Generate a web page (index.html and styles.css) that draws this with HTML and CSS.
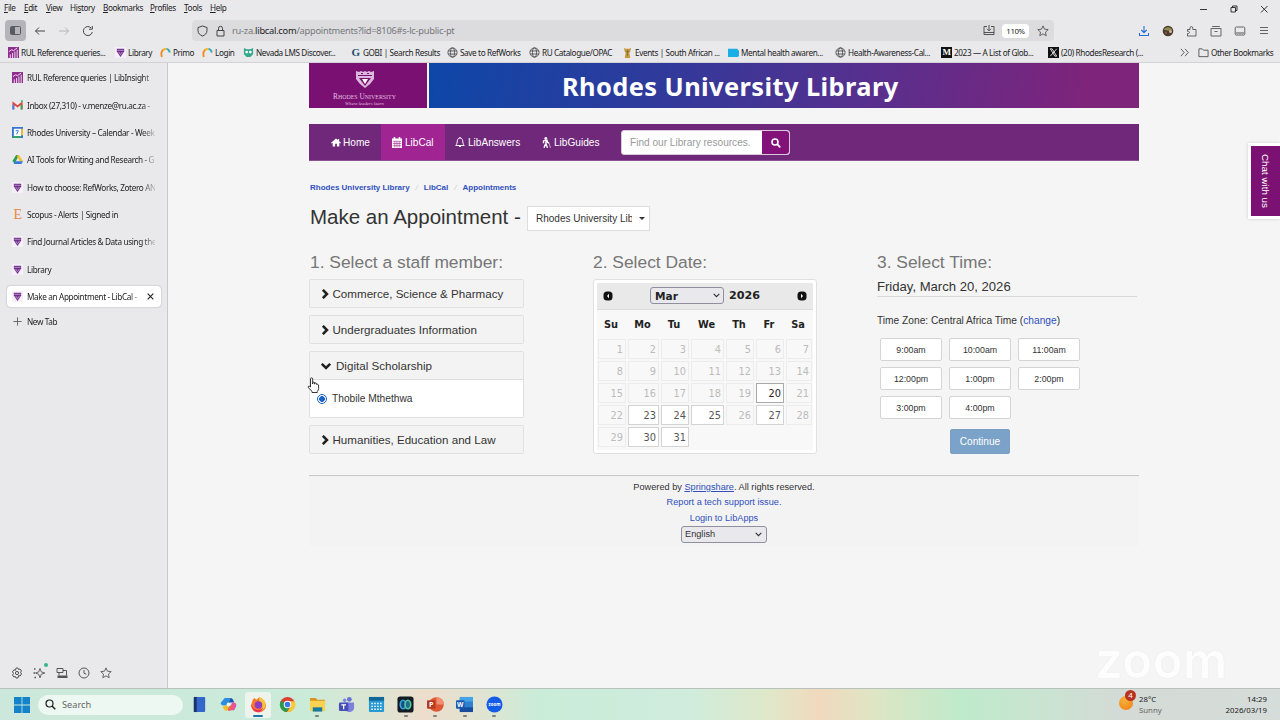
FILE: index.html
```html
<!DOCTYPE html>
<html lang="en">
<head>
  <meta charset="UTF-8" />
  <meta name="viewport" content="width=device-width, initial-scale=1.0"/>
  <title>Make an Appointment - LibCal</title>
  <link rel="stylesheet" href="styles.css">
</head>
<body>

  <!-- shared icons -->
  <svg class="defs" width="0" height="0">
    <symbol id="crest" viewBox="0 0 12 12">
      <rect width="12" height="12" fill="#f6effa"/>
      <path d="M2 2h8v3L6 11 2 5z" fill="#70308a"/>
      <path d="M2.5 3.6h7M4 5.4l2 3 2-3" stroke="#d9bde6" stroke-width=".7" fill="none"/>
    </symbol>
    <symbol id="insight" viewBox="0 0 12 12">
      <rect width="12" height="12" fill="#8f2d8f"/>
      <path d="M2.5 12V8M5 12V6.500M7.500 12V5M10 12V3M1 5l3-2 2 1 4-3" stroke="#fff" stroke-width=".9" fill="none"/>
    </symbol>
    <symbol id="globe" viewBox="0 0 12 12">
      <g fill="none" stroke="#444" stroke-width=".9"><circle cx="6" cy="6" r="5"/><ellipse cx="6" cy="6" rx="2.2" ry="5"/><path d="M1.4 4.3h9.2M1.4 7.7h9.2"/></g>
    </symbol>
    <symbol id="primo" viewBox="0 0 12 12">
      <g fill="none" stroke-width="2"><path d="M2 11Q0 3 6 2" stroke="#f08a1d"/><path d="M3.5 3.5Q5 1.8 7 2" stroke="#f4c21f"/><path d="M7 2q3 .3 3.6 4" stroke="#35a9b5"/></g>
    </symbol>
    <symbol id="chev" viewBox="0 0 8 8"><path d="M1.5 2.5L4 5l2.5-2.5" fill="none" stroke="#333" stroke-width="1"/></symbol>
    <symbol id="right" viewBox="0 0 10 10"><path d="M2.8 .8L7 5 2.8 9.2" fill="none" stroke="#222" stroke-width="2.5"/></symbol>
    <symbol id="star" viewBox="0 0 12 12"><path d="M6 .9l1.5 3.3 3.7.4-2.7 2.5.7 3.6L6 8.9l-3.2 1.8.7-3.6L.8 4.6l3.7-.4z" fill="none" stroke="#555" stroke-width=".9" stroke-linejoin="round"/></symbol>
  </svg>

  <header class="browser">
    <div class="menubar">
      <span><u>F</u>ile</span><span><u>E</u>dit</span><span><u>V</u>iew</span><span>Hi<u>s</u>tory</span><span><u>B</u>ookmarks</span><span><u>P</u>rofiles</span><span><u>T</u>ools</span><span><u>H</u>elp</span>
      <svg class="win-buttons" width="70" height="12" viewBox="0 0 70 12" fill="none" stroke="#222" stroke-width=".9">
        <path d="M0 6.500h7M31 4.500h4.500V9H31zM32.500 4.500V3H37v4.500h-1.500M61 3l6.500 6.500M67.500 3L61 9.500"/>
      </svg>
    </div>

    <div class="toolbar">
      <span class="side-toggle"><svg width="11" height="9" viewBox="0 0 11 9"><rect x=".5" y=".5" width="10" height="8" rx="1" fill="none" stroke="#5a5a62"/><path d="M1 1h4v7H1z" fill="#5a5a62"/></svg></span>
      <svg class="nav-icons" width="64" height="14" viewBox="0 0 64 14" fill="none" stroke-width="1">
        <path d="M14 7H4.500M8 3.500L4.500 7 8 10.500" stroke="#444"/>
        <path d="M28 7h9.500M34 3.500L37.500 7 34 10.500" stroke="#b5b5b8"/>
        <path d="M60 3.800A4.500 4.500 0 1 0 61.300 8M61.300 2v3.200H58" stroke="#444"/>
      </svg>
      <div class="urlbar">
        <svg width="11" height="12" viewBox="0 0 11 12"><path d="M5.500 1l4.500 1.500v3c0 3-2 4.500-4.500 5.500C3 10 1 8.500 1 5.500v-3z" fill="none" stroke="#444" stroke-width="1"/></svg>
        <svg class="lock" width="9" height="12" viewBox="0 0 9 12"><path d="M1 5.500h7V11H1zM2.500 5.500V3.300a2 2 0 0 1 4 0v2.200" fill="none" stroke="#444" stroke-width="1"/></svg>
        <span class="url">ru-za.<b>libcal.com</b>/appointments?lid=8106#s-lc-public-pt</span>
        <svg class="save" width="12" height="11" viewBox="0 0 12 11"><path d="M4 1.500H1v8h10v-8H8M1 7.500h10M6 0v5.500M4 3.800l2 2 2-2" fill="none" stroke="#444" stroke-width=".9"/></svg>
        <span class="zoom-level">110%</span>
        <svg width="12" height="12"><use href="#star"/></svg>
      </div>
      <div class="tools">
        <svg width="12" height="12" viewBox="0 0 12 12"><path d="M6 1v6.500M3.300 5L6 7.700 8.700 5M1.500 8v2.500h9V8" fill="none" stroke="#2a6fd6" stroke-width="1.100"/></svg>
        <svg width="12" height="12" viewBox="0 0 12 12"><circle cx="6" cy="6" r="5.300" fill="#4e3b30"/><path d="M1.500 4.500Q6 0 10.500 4.500L8 6 3 5z" fill="#8a9150"/><circle cx="8.500" cy="6.500" r="1.500" fill="#d8b2a0"/><circle cx="4" cy="7.800" r="1.200" fill="#87514b"/></svg>
        <svg width="12" height="12" viewBox="0 0 12 12"><path d="M1.500 4.500H4V3a1.400 1.400 0 0 1 2.800 0v1.500H10v6.500H1.500V8.500h1.200a1.200 1.200 0 0 0 0-2.200H1.500z" fill="none" stroke="#555" stroke-width=".9"/></svg>
        <svg width="12" height="12" viewBox="0 0 12 12"><path d="M2.200 1.500h7.600M1 3.500h10v7.500H1zM4.500 6.500h3" fill="none" stroke="#555" stroke-width=".9"/></svg>
        <svg width="12" height="12" viewBox="0 0 12 12"><rect x="1.200" y="2" width="9.600" height="8" rx="1.200" fill="none" stroke="#555" stroke-width=".9"/><path d="M2 8h8" stroke="#555"/></svg>
        <svg width="12" height="12" viewBox="0 0 12 12"><path d="M2 2.500h8M2 5.500h8M2 8.500h8" stroke="#555" stroke-width=".9"/></svg>
      </div>
    </div>

    <nav class="bookmarks">
      <a><svg><use href="#insight"/></svg>RUL Reference queries...</a>
      <a><svg><use href="#crest"/></svg>Library</a>
      <a><svg><use href="#primo"/></svg>Primo</a>
      <a><svg><use href="#primo"/></svg>Login</a>
      <a><svg viewBox="0 0 12 12"><path d="M1 1l3 1.500h4L11 1v7l-3 3H4L1 8z" fill="#35a98c"/><circle cx="4" cy="5.500" r="1.500" fill="#fff"/><circle cx="8" cy="5.500" r="1.500" fill="#fff"/></svg>Nevada LMS Discover...</a>
      <a><span class="ico gobi">G</span>GOBI | Search Results</a>
      <a><svg><use href="#globe"/></svg>Save to RefWorks</a>
      <a><svg><use href="#globe"/></svg>RU Catalogue/OPAC</a>
      <a><svg viewBox="0 0 12 12"><path d="M2 1l2 1h4l2-1-1 4-1 1 1 6H3l1-6-1-1z" fill="#c49a3a"/><path d="M6 3v7M4 5h4" stroke="#8b6f3b"/></svg>Events | South African ...</a>
      <a><svg viewBox="0 0 12 12"><path d="M0 2h10l2 2v6l-2 1H0z" fill="#19aee5"/></svg>Mental health awaren...</a>
      <a><svg><use href="#globe"/></svg>Health-Awareness-Cal...</a>
      <a><span class="ico medium">M</span>2023 — A List of Glob...</a>
      <a><svg viewBox="0 0 12 12"><rect width="12" height="12" fill="#111"/><path d="M2.500 2h2l5 8h-2zM9.500 2l-7 8" stroke="#fff" stroke-width=".9" fill="none"/></svg>(20) RhodesResearch (...</a>
      <a><svg viewBox="0 0 12 12"><path d="M1 2l3.500 4L1 10M5.500 2L9 6l-3.500 4" fill="none" stroke="#444" stroke-width=".9"/></svg></a>
      <a><svg viewBox="0 0 12 12"><path d="M1 2h3.500L6 3.500h5v7H1z" fill="none" stroke="#444" stroke-width=".9"/></svg>Other Bookmarks</a>
    </nav>
  </header>

  <div class="content">
    <aside class="sidebar">
      <div class="tab"><svg><use href="#insight"/></svg><span>RUL Reference queries | LibInsight</span></div>
      <div class="tab"><svg viewBox="0 0 12 12"><path d="M1.500 10V3.500L6 7l4.500-3.500V10" fill="none" stroke="#e0453a" stroke-width="2"/><path d="M1.500 10.500V5" stroke="#3f83ee" stroke-width="2"/><path d="M10.500 10.500V5" stroke="#37a857" stroke-width="2"/><circle cx="10.800" cy="1.200" r="1.200" fill="#3dbb8b"/></svg><span>Inbox (27,310) - v.menze@ru.ac.za -</span></div>
      <div class="tab"><svg viewBox="0 0 12 12"><path d="M1 1h10v10H1z" fill="#fff" stroke="#2f76d8" stroke-width="2"/><path d="M11 2v7" stroke="#f6bd27" stroke-width="2"/><path d="M1 11h8" stroke="#35a356" stroke-width="2"/><path d="M4 4h3L5 8" stroke="#2f76d8" fill="none"/></svg><span>Rhodes University – Calendar - Week</span></div>
      <div class="tab"><svg viewBox="0 0 12 12"><path d="M4.500 1h3L3 10.500.5 7.500z" fill="#299b52"/><path d="M7.500 1L12 8H8.500L5 2z" fill="#f4bd25"/><path d="M3.500 8H12l-1.700 3H2z" fill="#3a78df"/></svg><span>AI Tools for Writing and Research - G</span></div>
      <div class="tab"><svg><use href="#crest"/></svg><span>How to choose: RefWorks, Zotero AN</span></div>
      <div class="tab"><span class="ico scopus">E</span><span>Scopus - Alerts | Signed in</span></div>
      <div class="tab"><svg><use href="#crest"/></svg><span>Find Journal Articles &amp; Data using the</span></div>
      <div class="tab"><svg><use href="#crest"/></svg><span>Library</span></div>
      <div class="tab active"><svg><use href="#crest"/></svg><span>Make an Appointment - LibCal -</span><svg class="close" viewBox="0 0 8 8"><path d="M1.500 1.500l5 5M6.500 1.500l-5 5" stroke="#222" stroke-width="1"/></svg></div>
      <div class="tab new"><svg viewBox="0 0 12 12"><path d="M6 1.500v9M1.500 6h9" stroke="#555" stroke-width=".9"/></svg><span>New Tab</span></div>
      <div class="side-tools">
        <svg viewBox="0 0 12 12" fill="none" stroke="#555"><path d="M5 1h2l.5 1.500 1.500-.5 1.500 2-1 1.200 1 1.800-1.300 2-1.700-.5L7 11H5l-.6-1.500-1.600.5-1.300-2 1-1.500-1-1.700 1.400-2 1.600.5z"/><circle cx="6" cy="6" r="1.600"/></svg>
        <svg viewBox="0 0 12 12"><path d="M7 1.500l1.300 3.400L11.800 6 8.300 7.200 7 10.800 5.700 7.200 2.500 6l3.200-1.100z" fill="none" stroke="#555" stroke-width=".9"/><path d="M1 2h1.500M.5 6H2M1.500 10.500H3" stroke="#555" stroke-width="1.300"/></svg>
        <svg viewBox="0 0 12 12"><path d="M1 1.500h6v4H1zM7 3.500h3.500v5M3 5.500v3" fill="none" stroke="#555"/><path d="M1.500 8.500h10V11h-10z" fill="#555"/></svg>
        <svg viewBox="0 0 12 12" fill="none" stroke="#555"><circle cx="6" cy="6" r="5"/><path d="M6 3v3.300l2.300.9"/></svg>
        <svg><use href="#star"/></svg>
        <i class="dot"></i>
      </div>
    </aside>

    <main class="page">
      <div class="banner">
        <div class="logo">
          <svg width="20" height="18" viewBox="0 0 20 18"><path d="M1 1l3 1 2-1 2 1 2-1 2 1 2-1 2 1 3-1v8l-4 5-5 4-5-4-4-5z" fill="#dcb8dc"/><path d="M3 5.500h14M6 3.500h2M12 3.500h2" stroke="#7a1072" stroke-width="1.200"/><path d="M4 8h12l-6 8z" fill="#7a1072"/><path d="M7 9h6l-3 5z" fill="#fff"/></svg>
          <div class="logo-name">R<small>HODES</small> U<small>NIVERSITY</small></div>
          <div class="logo-motto">Where leaders learn</div>
        </div>
        <div class="banner-title">Rhodes University Library</div>
      </div>

      <nav class="navbar">
        <a class="home"><svg width="10" height="9" viewBox="0 0 11 10"><path d="M5.500.5L0 5.300l.8.800 1-.8V9.500h2.700v-3h2v3h2.700V5.300l1 .8.800-.8L9 3.500V1H7.500v1.300z" fill="#fff"/></svg>Home</a>
        <a class="libcal"><svg width="10" height="11" viewBox="0 0 10 11"><path d="M0 1.500h10V11H0z" fill="#fff"/><path d="M2.500 0v3M7.500 0v3" stroke="#fff" stroke-width="1.600"/><path d="M.8 4.300h8.400M.8 6.500h8.400M.8 8.700h8.400M2.800 4.300V10.500M5 4.300v6.200M7.200 4.300v6.200" stroke="#a02492" stroke-width=".6"/></svg>LibCal</a>
        <a class="answers"><svg width="10" height="11" viewBox="0 0 10 11"><path d="M5 1C2.800 1 2.300 3 2.200 5 2 7 1.200 7.700.8 8.500h8.400C8.800 7.700 8 7 7.800 5 7.700 3 7.200 1 5 1zM4 9.500h2M5 0v1" fill="none" stroke="#fff"/></svg>LibAnswers</a>
        <a class="guides"><svg width="9" height="11" viewBox="0 0 9 11"><circle cx="3.800" cy="1.300" r="1.300" fill="#fff"/><path d="M3 3l2 .2.500 2 1.500 1M3 3L1.500 4.200v2M4 4v3l1.500 3.800M3.500 7l-1.500 3.800" fill="none" stroke="#fff" stroke-width="1.400"/><path d="M7 6l1.500 5" stroke="#fff" stroke-width=".6"/></svg>LibGuides</a>
        <div class="search">
          <span>Find our Library resources.</span>
          <button><svg width="10" height="10" viewBox="0 0 10 10"><circle cx="4" cy="4" r="3" fill="none" stroke="#fff" stroke-width="1.600"/><path d="M6.200 6.200L9.300 9.300" stroke="#fff" stroke-width="1.800"/></svg></button>
        </div>
      </nav>

      <div class="breadcrumb"><a>Rhodes University Library</a><i>/</i><a>LibCal</a><i>/</i><a>Appointments</a></div>

      <div class="title-row">
        <h1>Make an Appointment -</h1>
        <div class="location"><span>Rhodes University Library</span></div>
      </div>

      <div class="steps">
        <section>
          <h2>1. Select a staff member:</h2>
          <div class="panel"><div class="panel-head"><svg><use href="#right"/></svg>Commerce, Science &amp; Pharmacy</div></div>
          <div class="panel"><div class="panel-head"><svg><use href="#right"/></svg>Undergraduates Information</div></div>
          <div class="panel">
            <div class="panel-head open"><svg><use href="#right"/></svg>Digital Scholarship</div>
            <div class="panel-body"><i class="radio"></i>Thobile Mthethwa</div>
          </div>
          <div class="panel"><div class="panel-head"><svg><use href="#right"/></svg>Humanities, Education and Law</div></div>
        </section>

        <section>
          <h2>2. Select Date:</h2>
          <div class="calendar">
            <div class="cal-head">
              <svg width="10" height="10" viewBox="0 0 10 10"><rect x=".5" y=".5" width="9" height="9" rx="3.500" fill="#111"/><path d="M6 2.800L4 5l2 2.200z" fill="#fff"/></svg>
              <div class="month">Mar<svg width="9" height="9"><use href="#chev"/></svg></div>
              <b>2026</b>
              <svg width="10" height="10" viewBox="0 0 10 10"><rect x=".5" y=".5" width="9" height="9" rx="3.500" fill="#111"/><path d="M4 2.800L6 5 4 7.200z" fill="#fff"/></svg>
            </div>
            <div class="cal-days"><b>Su</b><b>Mo</b><b>Tu</b><b>We</b><b>Th</b><b>Fr</b><b>Sa</b></div>
            <div class="cal-grid">
              <span>1</span><span>2</span><span>3</span><span>4</span><span>5</span><span>6</span><span>7</span>
              <span>8</span><span>9</span><span>10</span><span>11</span><span>12</span><span>13</span><span>14</span>
              <span>15</span><span>16</span><span>17</span><span>18</span><span>19</span><span class="open today">20</span><span>21</span>
              <span>22</span><span class="open">23</span><span class="open">24</span><span class="open">25</span><span>26</span><span class="open">27</span><span>28</span>
              <span>29</span><span class="open">30</span><span class="open">31</span>
            </div>
          </div>
        </section>

        <section>
          <h2>3. Select Time:</h2>
          <h3>Friday, March 20, 2026</h3>
          <p class="timezone">Time Zone: Central Africa Time (<a>change</a>)</p>
          <div class="slots">
            <button>9:00am</button><button>10:00am</button><button>11:00am</button>
            <button>12:00pm</button><button>1:00pm</button><button>2:00pm</button>
            <button>3:00pm</button><button>4:00pm</button>
          </div>
          <button class="continue">Continue</button>
        </section>
      </div>

      <footer>
        <p>Powered by <a class="under">Springshare</a>. All rights reserved.</p>
        <p><a>Report a tech support issue.</a></p>
        <p><a>Login to LibApps</a></p>
        <div class="language">English<svg width="9" height="9"><use href="#chev"/></svg></div>
      </footer>
    </main>
  </div>

  <div class="taskbar">
    <svg class="start" width="16" height="16" viewBox="0 0 16 16"><path d="M0 0h7.600v7.600H0zM8.400 0H16v7.600H8.400zM0 8.400h7.600V16H0zM8.400 8.400H16V16H8.400z" fill="#1483c9"/></svg>
    <div class="task-search"><svg width="11" height="11" viewBox="0 0 11 11"><circle cx="4.500" cy="4.500" r="3.500" fill="none" stroke="#222" stroke-width="1.200"/><path d="M7 7l3.300 3.300" stroke="#222" stroke-width="1.500"/></svg>Search</div>
    <div class="apps">
      <span><svg viewBox="0 0 18 18"><rect x="3" y="1" width="12" height="16" rx="1" fill="#3566cc"/><path d="M3 1h3v16H3z" fill="#193463"/></svg></span>
      <span><svg viewBox="0 0 18 18"><path d="M5 2h6l-3 8H4Q0 10 1 7z" fill="#2a8ee0"/><path d="M11 2q3 0 4 5h-5L8 10z" fill="#1956b5"/><path d="M13 7h2q3 1 2 4l-2 4H9z" fill="#e453a0"/><path d="M4 10h6l-2 5q-3 2-5-3z" fill="#ecc131"/><path d="M8 14l2-4h4l-2 5-3 1z" fill="#ef6352"/><circle cx="9" cy="9" r="2" fill="#eaf5ee"/></svg></span>
      <span class="current"><svg viewBox="0 0 18 18"><path d="M3 4l1.500-2L7 4l3-3 3 3 2 1 2 4a8 8 0 0 1-16 1z" fill="#f7782d"/><path d="M10 1q7 3 6.500 9-2 6-7 6 7-6 0-11z" fill="#fbc438"/><circle cx="9" cy="9.500" r="4" fill="#923bbd"/><path d="M1 8q2 7 8 7 3 0 5-3-1 5-6 5-6-1-7-9z" fill="#ec2c61"/></svg></span>
      <span><svg viewBox="0 0 18 18"><circle cx="9" cy="9" r="8" fill="#d94034"/><path d="M9 9L2 5a8 8 0 0 0 6 12l4-6z" fill="#2b9a4b"/><path d="M9 5.500h7.500A8 8 0 0 1 8.500 17l4-6z" fill="#f8c835"/><circle cx="9" cy="9" r="4" fill="#fff"/><circle cx="9" cy="9" r="3" fill="#3978e3"/></svg></span>
      <span class="run"><svg viewBox="0 0 18 18"><path d="M1 2h6l2 2h8v5H1z" fill="#d79420"/><path d="M1 5h16v11H1z" fill="#fad151"/><path d="M4 12h10v4.500H4z" fill="#17799f"/></svg></span>
      <span><svg viewBox="0 0 18 18"><circle cx="12" cy="3.500" r="2.500" fill="#6970d6"/><circle cx="7" cy="4.500" r="1.800" fill="#7d83df"/><path d="M7 7h10v6q-1 4-5 4t-5-4z" fill="#7b80dd"/><rect x="1" y="7" width="10" height="9" rx="1.500" fill="#444eb5"/><path d="M3.500 9.500h5M6 9.500v4.500" stroke="#fff" stroke-width="1.300"/></svg></span>
      <span><svg viewBox="0 0 18 18"><rect x="1" y="1" width="16" height="16" rx="1" fill="#2799d3"/><path d="M1 1h16v4H1z" fill="#126998"/><path d="M3.500 8h11M3.500 11h11M3.500 14h11" stroke="#fff" stroke-width="1.500" stroke-dasharray="1.600 1.500"/></svg></span>
      <span class="run"><svg viewBox="0 0 18 18"><rect x=".5" y=".5" width="17" height="17" rx="3" fill="#121a23"/><ellipse cx="6.500" cy="9" rx="3" ry="4.500" fill="#1b4a83" stroke="#31a7d9" stroke-width="1.800"/><ellipse cx="11.500" cy="9" rx="3" ry="4.500" fill="#1e6f86" stroke="#52c5a4" stroke-width="1.800"/></svg></span>
      <span class="run"><svg viewBox="0 0 18 18"><circle cx="10" cy="9" r="7.800" fill="#df5835"/><path d="M10 1.200A7.800 7.800 0 0 1 17.800 9H10z" fill="#f38e70"/><rect x="0" y="4.500" width="9" height="9" rx="1" fill="#b83a20"/><text x="4.500" y="11.800" font-size="7.500" font-weight="bold" text-anchor="middle" fill="#fff">P</text></svg></span>
      <span class="run"><svg viewBox="0 0 18 18"><rect x="4" y="1" width="14" height="16" rx="1" fill="#2e7fd1"/><path d="M4 1h14v5H4z" fill="#45a4e5"/><path d="M4 12h14v5H4z" fill="#174b9c"/><rect x="0" y="4.500" width="9" height="9" rx="1" fill="#1959b2"/><text x="4.500" y="11.500" font-size="7" font-weight="bold" text-anchor="middle" fill="#fff">W</text></svg></span>
      <span class="run"><svg viewBox="0 0 18 18"><circle cx="9" cy="9" r="8.500" fill="#145be8"/><text x="9" y="10.500" font-size="4.600" font-weight="bold" text-anchor="middle" fill="#fff">zoom</text></svg></span>
    </div>
    <div class="weather"><i class="sun"><em>4</em></i><div>28°C<br><small>Sunny</small></div></div>
    <div class="clock">14:29<br>2026/03/19</div>
  </div>

  <div class="chat">Chat with us</div>
  <div class="watermark">zoom</div>
  <svg class="cursor" width="13" height="17" viewBox="0 0 13 17"><path d="M3.500 10V2a1.100 1.100 0 0 1 2.200 0v5V5.500q1-.8 2 .2v1.500-1q1-.7 2 .3v1q1.300-.6 1.900.5v3.500q0 1.500-1.300 3v1H5v-1.200L1.200 10.500q-.4-1.500 1-1.300z" fill="#fff" stroke="#222" stroke-width=".9"/></svg>

</body>
</html>
```
FILE: styles.css
```css
:root {
  --chrome: #e9e9ec;
  --page: #f5f5f5;
  --purple: #70297a;
  --link: #2f50bd;
}

* {
  box-sizing: border-box;
}

body {
  margin: 0;
  width: 1280px;
  height: 720px;
  overflow: hidden;
  position: relative;
  display: flex;
  flex-direction: column;
  background: var(--page);
  font-family: 'Noto Sans', 'Open Sans', sans-serif;
  font-size: 8.2px;
  color: #222;
}

svg {
  flex: none;
  display: block;
}

.defs {
  position: absolute;
}

h1, h2, h3, p {
  margin: 0;
  font-weight: normal;
}

button {
  padding: 0;
  font-family: inherit;
}

/* browser chrome */
.browser {
  height: 63px;
  background: var(--chrome);
  border-bottom: 1px solid #d2d2d6;
  letter-spacing: -0.38px;
}

.menubar {
  height: 17px;
  padding: 0 0 2px 4px;
  display: grid;
  grid-template-columns: 20px 22px 24px 33px 47px 34px 26px 1fr 80px;
  align-items: center;
  line-height: 14px;
}

.menubar u {
  text-underline-offset: 1px;
}

.win-buttons {
  margin-top: 2px;
}

.toolbar {
  height: 27px;
  padding-left: 5px;
  display: flex;
  align-items: center;
}

.side-toggle {
  width: 21px;
  height: 21px;
  border-radius: 4px;
  background: #b4b4ba;
  display: flex;
  align-items: center;
  justify-content: center;
}

.nav-icons {
  margin-left: 5px;
}

.urlbar {
  margin-left: 97px;
  width: 862px;
  height: 21px;
  padding: 0 5px;
  border-radius: 4px;
  background: #dcdcde;
  display: flex;
  align-items: center;
}

.lock {
  margin: 0 7px 0 8px;
}

.url {
  flex: 1;
  font-size: 9.3px;
  letter-spacing: -0.26px;
  color: #77777c;
}

.url b {
  font-weight: normal;
  color: #222;
}

.save {
  margin-right: -1px;
}

.zoom-level {
  width: 27px;
  margin: 0 8px;
  line-height: 14px;
  text-align: center;
  background: #fff;
  border-radius: 4px;
  font-size: 7.8px;
}

.tools {
  margin-left: 84px;
  display: flex;
  gap: 12px;
}

.bookmarks {
  height: 18px;
  padding: 0 0 1px 8px;
  display: grid;
  grid-template-columns: 107px 45px 42px 41px 107px 97px 82px 93px 106px 107px 106px 107px 132px 18px 1fr;
  align-items: center;
}

.bookmarks a {
  display: flex;
  align-items: center;
  gap: 2px;
  white-space: nowrap;
}

.bookmarks svg {
  width: 11px;
  height: 11px;
}

.ico {
  width: 11px;
  height: 11px;
  line-height: 11px;
  text-align: center;
  font-family: 'Liberation Serif', serif;
  font-weight: bold;
}

.gobi {
  color: #234c6b;
  font-size: 11px;
}

.medium {
  background: #111;
  color: #fff;
  font-size: 9px;
}

.scopus {
  color: #e8873b;
  font-size: 14px;
  font-weight: normal;
}

.content {
  flex: 1;
  display: flex;
  min-height: 0;
}

/* vertical tabs */
.sidebar {
  width: 168px;
  padding: 1px 6px 0;
  background: var(--chrome);
  border-right: 1px solid #c9c9cd;
  display: flex;
  flex-direction: column;
  letter-spacing: -0.36px;
}

.tab {
  height: 27.35px;
  padding: 0 6px;
  display: flex;
  align-items: center;
  gap: 4px;
  white-space: nowrap;
}

.tab > svg {
  width: 11px;
  height: 11px;
}

.tab span:not(.ico) {
  flex: 1;
  overflow: hidden;
  mask-image: linear-gradient(to right, #000 115px, transparent 131px);
}

.tab.active {
  height: 21px;
  margin: 3px 0 3px 1px;
  padding-left: 5px;
  background: #fff;
  border-radius: 4px;
  box-shadow: 0 0 2px #aaa;
}

.tab.active span {
  mask-image: linear-gradient(to right, #000 103px, transparent 117px);
}

.tab .close {
  width: 9px;
  height: 9px;
}

.tab.new {
  height: 24px;
}

.side-tools {
  position: relative;
  margin: auto 0 9px 5px;
  display: flex;
  gap: 10.3px;
}

.side-tools svg {
  width: 12px;
  height: 12px;
}

.dot {
  position: absolute;
  left: 33px;
  top: -4px;
  width: 4px;
  height: 4px;
  border-radius: 50%;
  background: #37b588;
}

/* library page */
.page {
  width: 830px;
  margin-left: 141px;
  font-family: 'Liberation Sans', Arial, sans-serif;
  color: #333;
}

.page a {
  color: var(--link);
}

.banner {
  display: flex;
  gap: 2px;
  height: 46px;
  padding-bottom: 1px;
}

.logo {
  width: 118px;
  padding: 7px 7px 0 0;
  background: #7a1072;
  color: #e2bfe0;
  font-family: 'Liberation Serif', serif;
  display: flex;
  flex-direction: column;
  align-items: center;
}

.logo-name {
  margin-top: 5px;
  font-size: 7.4px;
  line-height: 8px;
}

.logo-name small {
  font-size: 5.9px;
}

.logo-motto {
  font-size: 4.8px;
  line-height: 5px;
  font-style: italic;
}

.banner-title {
  flex: 1;
  padding-left: 133px;
  background: linear-gradient(100deg, #0d47a8 0%, #2f3a9b 32%, #55308f 60%, #7e247b 92%);
  color: #fff;
  font: bold 25.4px/46px 'Noto Sans', sans-serif;
  letter-spacing: 0.42px;
}

.navbar {
  margin-top: 15px;
  height: 37px;
  background: var(--purple);
  border-bottom: 1px solid #8b5392;
  display: flex;
  font-size: 10.1px;
}

.navbar a {
  color: #fff;
  display: flex;
  align-items: center;
  gap: 3px;
}

.navbar .home {
  padding-left: 22px;
  width: 72px;
  gap: 2px;
}

.libcal {
  padding-left: 11px;
  width: 64px;
  background: #a02492;
}

.answers {
  padding-left: 10px;
  width: 86px;
}

.guides {
  padding-left: 11px;
  width: 90px;
}

.search {
  width: 169px;
  height: 25px;
  margin-top: 6px;
  display: flex;
  background: #fff;
  border: 1px solid #d8cbd9;
  border-radius: 3px;
  line-height: 23px;
  color: #999;
}

.search span {
  flex: 1;
  padding-left: 8px;
  white-space: nowrap;
  overflow: hidden;
}

.search button {
  width: 27px;
  border: 0;
  border-radius: 0 3px 3px 0;
  background: #82127a;
  display: flex;
  align-items: center;
  justify-content: center;
}

.breadcrumb {
  margin-top: 20px;
  padding: 1px 0 0 1px;
  height: 12px;
  line-height: 12px;
  font-size: 8px;
  font-weight: bold;
}

.breadcrumb i {
  margin: 0 6px;
  color: #ccc;
  font-weight: normal;
}

.title-row {
  margin-top: 13px;
  height: 26px;
  padding-left: 1px;
  display: flex;
  gap: 6px;
}

h1 {
  width: 211px;
  font-size: 20.5px;
  line-height: 22px;
  white-space: nowrap;
}

.location {
  width: 123px;
  height: 25px;
  padding: 0 4px 0 8px;
  border: 1px solid #ddd;
  background: #fff;
  font-size: 10px;
  line-height: 23px;
  display: flex;
  align-items: center;
  justify-content: space-between;
}

.location span {
  width: 96px;
  overflow: hidden;
  white-space: nowrap;
}

.location::after {
  content: "";
  border: 3px solid transparent;
  border-top-color: #333;
  border-bottom: 0;
}

.steps {
  margin-top: 20px;
  height: 223px;
  display: grid;
  grid-template-columns: 284px 284px 1fr;
}

h2 {
  color: #777;
  font-size: 17.4px;
  line-height: 20px;
  margin-bottom: 7px;
}

.steps section:first-child h2 {
  padding-left: 1px;
}

.panel {
  width: 215px;
  margin-bottom: 7px;
  border: 1px solid #e0e0e0;
  border-radius: 2px;
}

.panel-head {
  height: 27px;
  padding-left: 10px;
  display: flex;
  align-items: center;
  gap: 2.5px;
  background: #f3f3f3;
  font-size: 11.6px;
}

.panel-head svg {
  width: 10px;
  height: 10px;
}

.panel-head.open {
  gap: 5px;
  padding-left: 11px;
}

.panel-head.open svg {
  transform: rotate(90deg);
}

.panel-body {
  height: 38px;
  padding-left: 7px;
  display: flex;
  align-items: center;
  gap: 5px;
  background: #fff;
  border-top: 1px solid #dedede;
  font-size: 10.2px;
}

.radio {
  width: 10px;
  height: 10px;
  border: 1px solid #1c62c4;
  border-radius: 50%;
  background: radial-gradient(#1c62c4 45%, #fff 55%);
}

.calendar {
  width: 224px;
  height: 175px;
  padding: 3px;
  border: 1px solid #e0e0e0;
  border-radius: 3px;
  background: linear-gradient(#f8f8f8, #f8f8f8) content-box, #fff;
  font-family: 'DejaVu Sans', sans-serif;
  font-size: 9.8px;
}

.cal-head {
  height: 27px;
  padding: 0 6px 1px;
  background: #e9e9e9;
  border-bottom: 1px solid #dcdcdc;
  display: flex;
  align-items: center;
  font-size: 11.2px;
  color: #222;
}

.month {
  width: 74px;
  height: 17px;
  margin: 0 5px 0 37px;
  padding: 0 2px 0 4px;
  border: 1px solid #8f8f9d;
  border-radius: 3px;
  background: #e9e9ed;
  font-weight: bold;
  font-size: 10.6px;
  display: flex;
  align-items: center;
  justify-content: space-between;
}

.cal-head b {
  flex: 1;
}

.cal-days,
.cal-grid {
  display: grid;
  grid-template-columns: 30px 33px 30px 35px 30px 30px 28px;
}

.cal-days {
  height: 28px;
  padding-right: 2px;
  margin-left: -1px;
  line-height: 29px;
  text-align: center;
  font-size: 9.8px;
  color: #222;
}

.cal-grid {
  grid-auto-rows: 22px;
}

.cal-grid span {
  margin: 1px;
  padding-right: 2px;
  border: 1px solid #ececec;
  text-align: right;
  line-height: 19px;
  color: #bbb;
}

.cal-grid .open {
  border-color: #d3d3d3;
  background: #fff;
  color: #555;
}

.cal-grid .today {
  border-color: #aaa;
  color: #222;
}

h3 {
  margin-top: -3px;
  height: 21px;
  width: 260px;
  line-height: 21px;
  font-size: 13.1px;
  border-bottom: 1px solid #d8d8d8;
}

.timezone {
  margin-top: 17px;
  line-height: 13px;
  font-size: 10.2px;
}

.slots {
  margin: 11px 0 0 3px;
  display: grid;
  grid-template-columns: repeat(3, 62px);
  gap: 6px 7px;
}

.slots button {
  height: 23px;
  border: 1px solid #d4d4d4;
  border-radius: 2px;
  background: #fff;
  color: #333;
  font-size: 8.8px;
}

.continue {
  display: block;
  margin: 10px 0 0 73px;
  width: 60px;
  height: 25px;
  border: 1px solid #7b9fc2;
  border-radius: 2px;
  background: #7ba2c8;
  color: #fff;
  font-size: 10.1px;
}

footer {
  height: 71px;
  padding-top: 4px;
  border-top: 1px solid #c8c8c8;
  background: #f3f3f3;
  text-align: center;
  font-size: 9.2px;
  line-height: 15.4px;
}

.under {
  text-decoration: underline;
}

.language {
  width: 86px;
  height: 17px;
  margin: 0 auto;
  padding: 0 3px 0 3px;
  border: 1px solid #8f8f9d;
  border-radius: 3px;
  background: #e9e9ed;
  display: flex;
  align-items: center;
  justify-content: space-between;
}

/* windows taskbar */
.taskbar {
  height: 32px;
  border-top: 1px solid #b6c2bb;
  background: linear-gradient(90deg, #cce8dc 0%, #cbebd9 24%, #dce5d2 29%, #edddcc 33%, #dfe4d2 38%, #c9ecd9 42%, #d0ecdc 54%, #dfe8c9 60%, #f1d9bd 64%, #dfe5c4 68%, #bfeacb 75%, #cbe3d2 82%, #d4dad6 88%, #d6dcd9 100%);
  display: flex;
  align-items: center;
  padding-left: 14px;
}

.task-search {
  width: 145px;
  height: 20px;
  margin: 0 3px 0 8px;
  padding-left: 7px;
  border-radius: 10px;
  background: #eef8f2;
  display: flex;
  align-items: center;
  gap: 6px;
  font-size: 9.2px;
  color: #666;
}

.apps {
  display: flex;
  gap: 3.5px;
}

.apps span {
  width: 26px;
  height: 26px;
  border-radius: 3px;
  display: flex;
  flex-direction: column;
  align-items: center;
  justify-content: center;
}

.apps svg {
  width: 17px;
  height: 17px;
}

.current {
  background: #edf4ed;
}

.current::after,
.run::after {
  content: "";
  width: 4px;
  height: 2px;
  margin: 2px 0 -4px;
  border-radius: 1px;
  background: #7b827e;
}

.current::after {
  width: 10px;
  background: #1c75ad;
}

.weather {
  margin-left: auto;
  width: 99px;
  display: flex;
  gap: 6px;
  line-height: 10.5px;
  font-size: 7.8px;
}

.weather small {
  font-size: 7.8px;
  color: #666;
}

.sun {
  position: relative;
  width: 14px;
  height: 14px;
  margin-top: 2px;
  border-radius: 50%;
  background: radial-gradient(circle at 40% 30%, #f7b13b, #ee7d10);
}

.sun em {
  position: absolute;
  left: 6px;
  top: -6px;
  width: 11px;
  height: 11px;
  border-radius: 50%;
  background: #b8321f;
  color: #fff;
  font-style: normal;
  line-height: 11px;
  text-align: center;
}

.clock {
  width: 49px;
  padding-right: 13px;
  box-sizing: content-box;
  text-align: right;
  line-height: 10.5px;
  font-size: 7.8px;
}

/* floating over the page */
.chat {
  position: absolute;
  right: 0;
  top: 143px;
  width: 32px;
  height: 76px;
  border: 3px solid #fff;
  border-right: 0;
  background: #7b1172;
  box-shadow: 0 0 3px #ccc;
  color: #fff;
  font: 9.8px/30px 'Liberation Sans', sans-serif;
  writing-mode: vertical-rl;
  text-align: center;
}

.watermark {
  position: absolute;
  left: 1095px;
  top: 634px;
  color: #fdfdfd;
  font: 600 49px/54px Inter, sans-serif;
  letter-spacing: 0.5px;
  text-shadow: 0 0 1px #ddd;
}

.cursor {
  position: absolute;
  left: 307px;
  top: 377px;
}
```
